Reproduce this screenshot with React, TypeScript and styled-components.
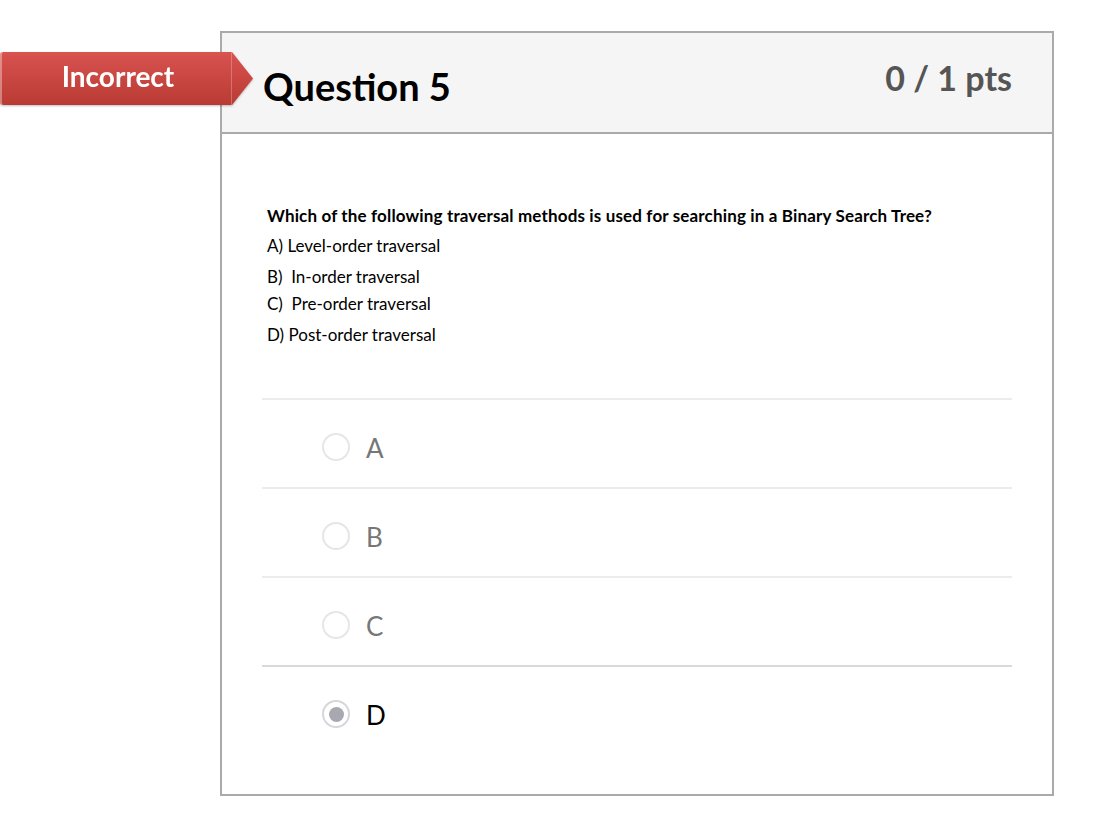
import React from 'react';
import styled, { createGlobalStyle } from 'styled-components';

const GlobalStyle = createGlobalStyle`
  body {
    margin: 0;
    background: #fff;
    font-family: Lato, 'Open Sans', sans-serif;
  }
`;

const Page = styled.div`
  padding: 31px 0 0 220px;
`;

const Card = styled.div`
  position: relative;
  width: 830px;
  border: 2px solid #aaa;
  background: #fff;
`;

const Header = styled.div`
  height: 99px;
  background: #f5f5f5;
  border-bottom: 2px solid #aaa;
  display: flex;
  justify-content: space-between;
  align-items: flex-start;
  padding: 0 40px 0 41px;
`;

const Title = styled.h2`
  margin: 30px 0 0;
  font-size: 38px;
  font-weight: 700;
  color: #000;
`;

const Points = styled.div`
  margin-top: 24px;
  font-size: 34px;
  font-weight: 700;
  color: #555;
`;

const Badge = styled.div`
  position: absolute;
  left: -222px;
  top: 19px;
  width: 253px;
  height: 53px;
  display: flex;
  align-items: center;
  filter: drop-shadow(0 1px 1px rgba(0, 0, 0, 0.25));
`;

const BadgeBody = styled.div`
  width: 232px;
  height: 100%;
  background: linear-gradient(#d9534f, #b93a34);
  border-radius: 3px 0 0 3px;
  box-shadow: inset 4px 0 0 -2px rgba(255, 255, 255, 0.35), inset -1px 0 0 rgba(255, 255, 255, 0.25);
  color: #fff;
  font-size: 28px;
  font-weight: 700;
  display: flex;
  align-items: center;
  justify-content: center;
  padding: 0 0 5px 4px;
  box-sizing: border-box;
`;

const BadgeTip = styled.div`
  width: 21px;
  height: 100%;
  background: linear-gradient(#d9534f, #b93a34);
  clip-path: polygon(0 0, 100% 50%, 0 100%);
`;

const Body = styled.div`
  padding: 72px 40px 40px 40px;
`;

const QuestionText = styled.div`
  font-family: Lato, 'Open Sans', sans-serif;
  font-size: 17px;
  line-height: 20px;
  color: #000;
`;

const Prompt = styled.p`
  margin: 0 0 10px 5px;
  font-weight: 700;
  letter-spacing: 0.15px;
`;

const Choice = styled.p<{ $gap: number }>`
  margin: 0 0 ${(p) => p.$gap}px 5px;
`;

const Answers = styled.div`
  margin-top: 53px;
`;

const AnswerRow = styled.div<{ $dark?: boolean }>`
  height: 80px;
  padding: 7px 0 0 60px;
  border-top: 2px solid ${(p) => (p.$dark ? '#d9d9d9' : '#ececec')};
  display: flex;
  align-items: center;
  gap: 16px;
`;

const Radio = styled.span<{ $checked?: boolean }>`
  width: 24px;
  height: 24px;
  border-radius: 50%;
  border: 2px solid ${(p) => (p.$checked ? '#d6d6dc' : '#e6e6e6')};
  background: #fff;
  display: flex;
  align-items: center;
  justify-content: center;
  &::after {
    content: '';
    display: ${(p) => (p.$checked ? 'block' : 'none')};
    width: 15px;
    height: 15px;
    border-radius: 50%;
    background: #a8a8b0;
  }
`;

const Letter = styled.span<{ $checked?: boolean }>`
  font-size: 26px;
  color: ${(p) => (p.$checked ? '#000' : '#777')};
  margin-top: 2px;
`;

const options = [
  { letter: 'A', checked: false },
  { letter: 'B', checked: false },
  { letter: 'C', checked: false },
  { letter: 'D', checked: true },
];

const App: React.FC = () => {
  return (
    <Page>
      <GlobalStyle />
      <Card>
        <Badge>
          <BadgeBody>Incorrect</BadgeBody>
          <BadgeTip />
        </Badge>
        <Header>
          <Title>Question 5</Title>
          <Points>0 / 1 pts</Points>
        </Header>
        <Body>
          <QuestionText>
            <Prompt>Which of the following traversal methods is used for searching in a Binary Search Tree?</Prompt>
            <Choice $gap={11}>A) Level-order traversal</Choice>
            <Choice $gap={7}>B)&nbsp; In-order traversal</Choice>
            <Choice $gap={11}>C)&nbsp; Pre-order traversal</Choice>
            <Choice $gap={0}>D) Post-order traversal</Choice>
          </QuestionText>
          <Answers>
            {options.map((o) => (
              <AnswerRow key={o.letter} $dark={o.checked}>
                <Radio $checked={o.checked} />
                <Letter $checked={o.checked}>{o.letter}</Letter>
              </AnswerRow>
            ))}
          </Answers>
        </Body>
      </Card>
    </Page>
  );
};

export default App;
